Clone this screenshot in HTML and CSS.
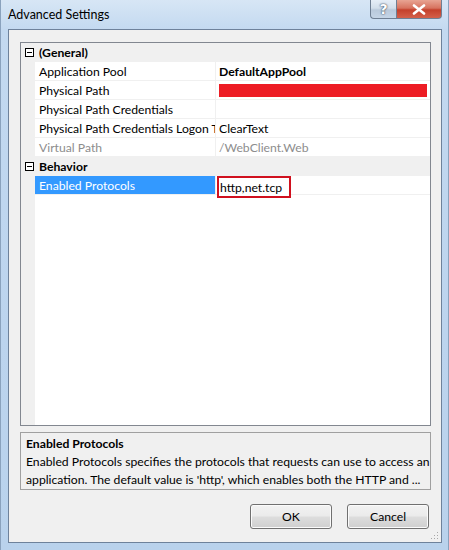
FILE: index.html
```html
<!DOCTYPE html>
<html>
<head>
<meta charset="utf-8">
<link rel="stylesheet" href="styles.css">
</head>
<body>
<div class="window">
  <div class="titlebar">
    <div class="title">Advanced Settings</div>
    <div class="caption-buttons">
      <div class="cap help">?</div>
      <div class="cap close">
        <svg width="14" height="11" viewBox="0 0 14 11"><path d="M2 1.5 L12 9.5 M12 1.5 L2 9.5" stroke="#ffffff" stroke-width="2.6" stroke-linecap="round"/></svg>
      </div>
    </div>
  </div>
  <div class="client">
    <div class="grid">
      <div class="row cat">
        <div class="gutter"><span class="toggle"></span></div>
        <div class="catname">(General)</div>
      </div>
      <div class="row">
        <div class="gutter"></div>
        <div class="name">Application Pool</div>
        <div class="value bold">DefaultAppPool</div>
      </div>
      <div class="row">
        <div class="gutter"></div>
        <div class="name">Physical Path</div>
        <div class="value"><span class="redact"></span></div>
      </div>
      <div class="row">
        <div class="gutter"></div>
        <div class="name">Physical Path Credentials</div>
        <div class="value"></div>
      </div>
      <div class="row">
        <div class="gutter"></div>
        <div class="name">Physical Path Credentials Logon Type</div>
        <div class="value">ClearText</div>
      </div>
      <div class="row readonly">
        <div class="gutter"></div>
        <div class="name">Virtual Path</div>
        <div class="value">/WebClient.Web</div>
      </div>
      <div class="row cat">
        <div class="gutter"><span class="toggle"></span></div>
        <div class="catname">Behavior</div>
      </div>
      <div class="row selected">
        <div class="gutter"></div>
        <div class="name">Enabled Protocols</div>
        <div class="value open"><span class="highlight">http,net.tcp</span></div>
      </div>
      <div class="filler">
        <div class="gutter"></div>
      </div>
    </div>
    <div class="desc">
      <div class="desc-title">Enabled Protocols</div>
      <div class="desc-text">Enabled Protocols specifies the protocols that requests can use to access an<br>application. The default value is 'http', which enables both the HTTP and ...</div>
    </div>
    <div class="buttons">
      <div class="btn">OK</div>
      <div class="btn">Cancel</div>
    </div>
    <div class="grip"></div>
  </div>
</div>
</body>
</html>
```

FILE: styles.css
```css
html, body {
  margin: 0;
  padding: 0;
}
body {
  width: 449px;
  height: 550px;
  overflow: hidden;
  font-family: "Segoe UI", Lato, "Noto Sans", sans-serif;
  font-size: 12.2px;
  color: #000;
}
.window {
  width: 449px;
  height: 550px;
  box-sizing: border-box;
  background: linear-gradient(180deg, #d7e6f5 0px, #c3d9f0 30px, #bcd4ee 60%, #b9d2ec 100%);
  display: flex;
  flex-direction: column;
  border-left: 1px solid #8aa2bd;
  border-right: 1px solid #8aa2bd;
}
.titlebar {
  height: 29px;
  display: flex;
  align-items: flex-start;
  justify-content: space-between;
  flex: none;
}
.title {
  padding-left: 7px;
  padding-top: 7px;
  font-size: 12.5px;
  color: #000;
}
.caption-buttons {
  display: flex;
  margin-right: 6px;
}
.cap {
  height: 19px;
  box-sizing: border-box;
  display: flex;
  align-items: center;
  justify-content: center;
  border: 1px solid #6f7f93;
  border-top: none;
}
.help {
  width: 26px;
  border-radius: 0 0 0 4px;
  border-right: none;
  background: linear-gradient(180deg, #e6eef7 0%, #d3dfeb 45%, #b9c9db 55%, #c5d5e6 100%);
  color: #ffffff;
  font-family: "DejaVu Sans", sans-serif;
  font-weight: bold;
  font-size: 14px;
  text-shadow: 0 0 2px #3a4a5e, 0 0 1px #3a4a5e;
}
.close {
  width: 46px;
  border-radius: 0 0 4px 0;
  background: linear-gradient(180deg, #e8a493 0%, #d7735f 45%, #c4402b 55%, #d4604a 100%);
}
.client {
  flex: 1;
  margin: 0 6px 7px 7px;
  border: 1px solid #6e829b;
  background: #f0f0f0;
  padding: 12px 10px 0 11px;
  display: flex;
  flex-direction: column;
  position: relative;
}
.grid {
  width: 411px;
  height: 384px;
  box-sizing: border-box;
  border: 1px solid #828790;
  background: #ffffff;
  display: flex;
  flex-direction: column;
}
.row {
  height: 19px;
  display: flex;
  flex: none;
  box-sizing: border-box;
  border-bottom: 1px solid #f0f0f0;
}
.gutter {
  width: 14px;
  flex: none;
  background: #f0f0f0;
  display: flex;
  align-items: center;
  justify-content: center;
  padding-left: 2px;
  box-sizing: border-box;
}
.toggle {
  width: 9px;
  height: 9px;
  box-sizing: border-box;
  border: 1px solid #000;
  position: relative;
  background: #fff;
}
.toggle::after {
  content: "";
  position: absolute;
  left: 1px;
  right: 1px;
  top: 3px;
  height: 1px;
  background: #000;
}
.cat {
  background: #f0f0f0;
}
.catname {
  font-weight: bold;
  padding-left: 4px;
  padding-top: 1px;
  line-height: 18px;
}
.name {
  width: 181px;
  flex: none;
  padding-left: 4px;
  padding-top: 1px;
  box-sizing: border-box;
  white-space: nowrap;
  overflow: hidden;
  line-height: 17px;
  border-right: 1px solid #f0f0f0;
}
.value {
  flex: 1;
  padding-left: 3px;
  padding-top: 1px;
  line-height: 17px;
  white-space: nowrap;
  overflow: hidden;
}
.value.open {
  overflow: visible;
  padding-top: 0;
  position: relative;
  z-index: 1;
}
.bold {
  font-weight: bold;
}
.readonly .name,
.readonly .value {
  color: #8d8d8d;
}
.selected .name {
  background: #3399ff;
  color: #ffffff;
}
.redact {
  display: block;
  margin-top: 2px;
  margin-left: 0;
  width: 208px;
  height: 13px;
  background: #ed1c24;
}
.highlight {
  display: inline-block;
  margin-left: -2px;
  padding: 1px 3px 0 1px;
  border: 2px solid #d0101e;
  height: 17px;
  line-height: 17px;
  width: 66px;
  box-sizing: content-box;
  background: #fff;
}
.filler {
  flex: 1;
  display: flex;
}
.desc {
  margin-top: 6px;
  width: 411px;
  height: 58px;
  box-sizing: border-box;
  border: 1px solid #a0a0a0;
  padding: 2px 4px 0 5px;
  line-height: 18px;
  background: #f0f0f0;
}
.desc-title {
  font-weight: bold;
}
.desc-text {
  white-space: nowrap;
}
.buttons {
  display: flex;
  justify-content: flex-end;
  gap: 15px;
  margin-top: 14px;
  padding-right: 2px;
}
.btn {
  width: 82px;
  height: 25px;
  box-sizing: border-box;
  border: 1px solid #707070;
  border-radius: 3px;
  background: linear-gradient(180deg, #f2f2f2 0%, #ebebeb 48%, #dddddd 52%, #cfcfcf 100%);
  box-shadow: inset 0 0 0 1px #fbfbfb;
  display: flex;
  align-items: center;
  justify-content: center;
}
.grip {
  position: absolute;
  right: 3px;
  bottom: 3px;
  width: 8px;
  height: 8px;
  background:
    radial-gradient(circle, #a8a8a8 0.8px, transparent 1px) 0 0 / 3px 3px;
  clip-path: polygon(100% 0, 100% 100%, 0 100%);
}
```
